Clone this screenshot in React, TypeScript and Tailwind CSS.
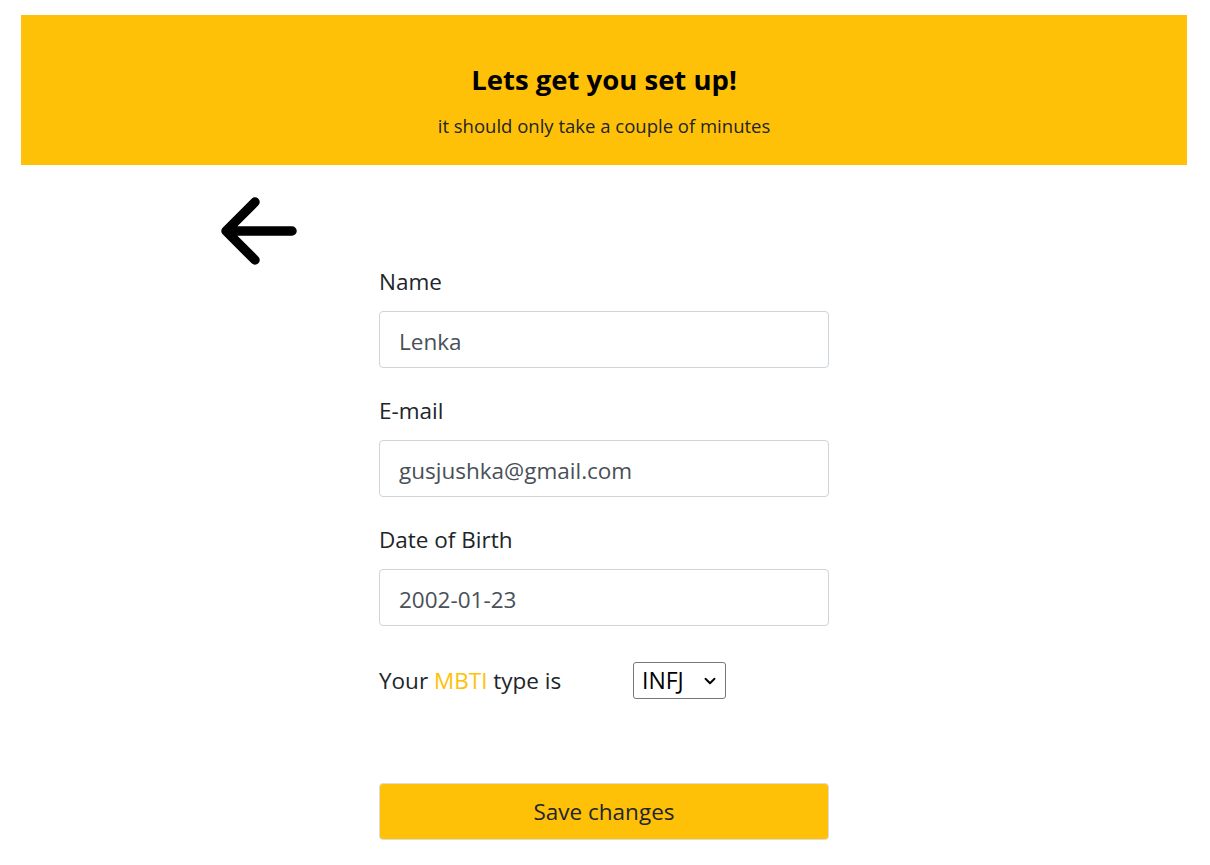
import { ChevronDown } from 'lucide-react'

const FONT = { fontFamily: '"Open Sans", "Noto Sans", sans-serif' }

function BackArrow() {
  return (
    <svg width="80" height="72" viewBox="0 0 80 72" fill="none">
      <path
        d="M37 7 L8 36 L37 65 M8 36 H74"
        stroke="black"
        strokeWidth="9.5"
        strokeLinecap="round"
        strokeLinejoin="round"
      />
    </svg>
  )
}

function Field({ label, value }: { label: string; value: string }) {
  return (
    <div className="mb-[28px]">
      <label className="block text-[22.5px] leading-[30px] text-[#212529] mb-[14px]">{label}</label>
      <input
        readOnly
        value={value}
        className="w-full h-[57px] rounded-[4px] border border-[#ced4da] px-[19px] pt-[4px] text-[22.5px] text-[#495057] outline-none"
        style={FONT}
      />
    </div>
  )
}

export default function App() {
  return (
    <div className="min-h-[865px] bg-white pt-[15px]" style={FONT}>
      <div className="ml-[21px] w-[1166px] h-[150px] bg-[#ffc107] flex flex-col items-center pt-[47px]">
        <h1 className="text-[27.5px] leading-[36px] font-bold text-black">Lets get you set up!</h1>
        <p className="mt-[15px] text-[18.5px] leading-[26px] text-[#212529]">it should only take a couple of minutes</p>
      </div>

      <div className="pt-[30px]" style={{ marginLeft: 218 }}>
        <BackArrow />
      </div>

      <div className="w-[450px] ml-[379px]">
        <Field label="Name" value="Lenka" />
        <Field label="E-mail" value="gusjushka@gmail.com" />
        <Field label="Date of Birth" value="2002-01-23" />

        <div className="flex items-center pt-[8px]">
          <span className="text-[22.5px] text-[#212529] w-[254px]">
            Your <span className="text-[#ffc107]">MBTI</span> type is
          </span>
          <div className="w-[93px] h-[37px] border border-[#767676] rounded-[3px] flex items-center justify-between pl-[8px] pr-[6px]">
            <span className="text-[23px] text-black">INFJ</span>
            <ChevronDown size={18} strokeWidth={2.5} className="text-black" />
          </div>
        </div>

        <button className="mt-[84px] w-full h-[57px] rounded-[4px] border border-[#dcdcdc] bg-[#ffc107] text-[22.5px] text-[#212529]">
          Save changes
        </button>
      </div>
    </div>
  )
}
